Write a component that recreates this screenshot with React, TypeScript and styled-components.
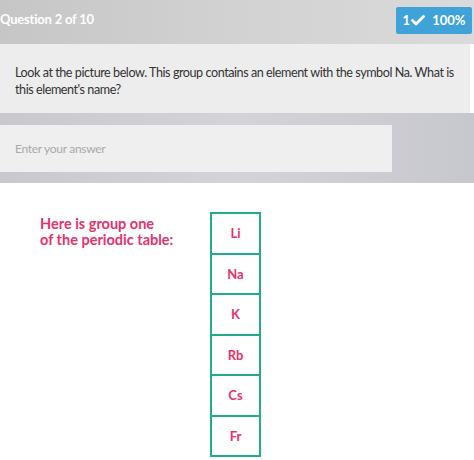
import React from "react";
import styled, { createGlobalStyle } from "styled-components";

const GlobalStyle = createGlobalStyle`
  body {
    margin: 0;
    background: #ffffff;
    font-family: "Lato", "Open Sans", sans-serif;
  }
`;

const Header = styled.div`
  height: 44px;
  display: flex;
  align-items: center;
  justify-content: space-between;
  padding: 0 2px 0 0;
  background: linear-gradient(90deg, #c6c6c6 0%, #d2d2d2 50%, #dadada 100%);
`;

const Title = styled.div`
  color: #ffffff;
  font-weight: 700;
  font-size: 13px;
  letter-spacing: -0.2px;
  margin-top: -7px;
`;

const Badge = styled.div`
  width: 76px;
  height: 27px;
  margin-top: -4px;
  border-radius: 2px;
  background: #3fa3da;
  color: #ffffff;
  font-weight: 700;
  font-size: 13px;
  display: flex;
  align-items: center;
  justify-content: center;
  gap: 7px;
`;

const Score = styled.span`
  display: flex;
  align-items: center;
  gap: 1px;
`;

const QuestionPanel = styled.div`
  background: #ededed;
  padding: 20px 15px 0 15px;
  height: 49px;
  margin-right: 4px;
  color: #333333;
  font-size: 12.6px;
  letter-spacing: -0.45px;
  line-height: 17px;
  white-space: nowrap;
`;

const AnswerBand = styled.div`
  height: 70px;
  padding-top: 12px;
  box-sizing: border-box;
  background: linear-gradient(90deg, #c9c9cd 0%, #d3d3d8 50%, #c7c7ce 100%);
`;

const AnswerInput = styled.input`
  display: block;
  width: 392px;
  height: 47px;
  box-sizing: border-box;
  border: none;
  outline: none;
  background: #efefef;
  padding: 0 15px;
  font-family: "Lato", "Open Sans", sans-serif;
  font-size: 12px;
  letter-spacing: -0.3px;
  color: #333;
  &::placeholder {
    color: #a9a9a9;
  }
`;

const Content = styled.div`
  display: flex;
  padding: 29px 0 0 40px;
  gap: 37px;
`;

const Caption = styled.div`
  color: #e8316b;
  font-weight: 700;
  font-size: 14.5px;
  line-height: 16px;
  padding-top: 4px;
  width: 133px;
  white-space: nowrap;
`;

const Table = styled.div`
  display: flex;
  flex-direction: column;
  width: 51px;
  border: 2px solid #1fad8e;
  box-sizing: border-box;
`;

const Cell = styled.div<{ $last?: boolean }>`
  height: 38.5px;
  display: flex;
  align-items: center;
  justify-content: center;
  border-bottom: ${(p) => (p.$last ? "none" : "2px solid #1fad8e")};
  color: #e8316b;
  font-weight: 700;
  font-size: 13px;
`;

const elements = ["Li", "Na", "K", "Rb", "Cs", "Fr"];

export default function App() {
  return (
    <>
      <GlobalStyle />
      <Header>
        <Title>Question 2 of 10</Title>
        <Badge>
          <Score>
            1
            <svg width="14" height="11" viewBox="0 0 14 11">
              <path
                d="M1.5 5.5 L5 9 L12.5 1.5"
                fill="none"
                stroke="#fff"
                strokeWidth="2.8"
                strokeLinecap="round"
                strokeLinejoin="round"
              />
            </svg>
          </Score>
          <span>100%</span>
        </Badge>
      </Header>
      <QuestionPanel>
        Look at the picture below. This group contains an element with the symbol Na. What is
        <br />
        this element's name?
      </QuestionPanel>
      <AnswerBand>
        <AnswerInput placeholder="Enter your answer" />
      </AnswerBand>
      <Content>
        <Caption>
          Here is group one
          <br />
          of the periodic table:
        </Caption>
        <Table>
          {elements.map((el, i) => (
            <Cell key={el} $last={i === elements.length - 1}>
              {el}
            </Cell>
          ))}
        </Table>
      </Content>
    </>
  );
}
